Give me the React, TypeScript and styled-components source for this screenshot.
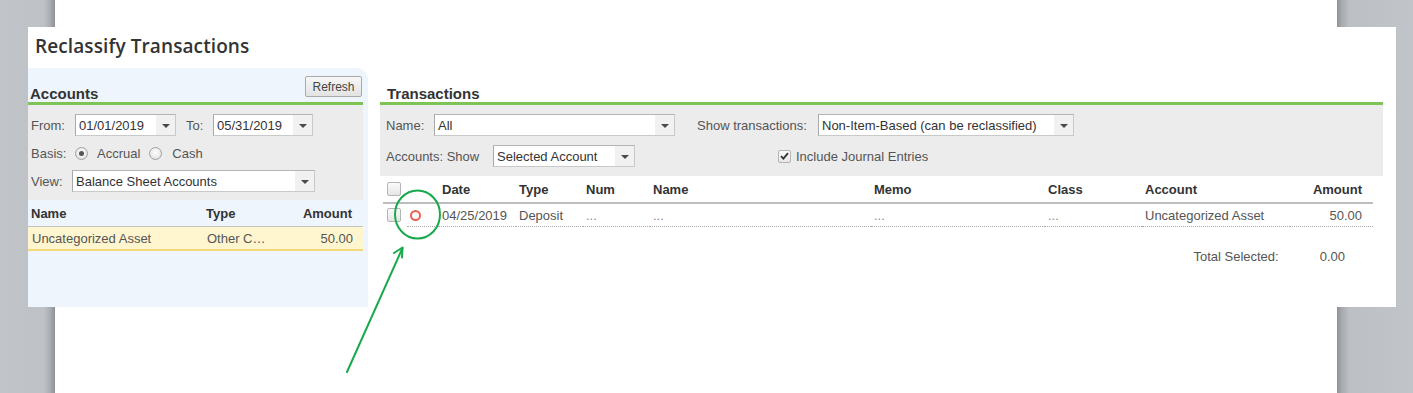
import React from "react";
import styled, { createGlobalStyle, css } from "styled-components";

const GlobalStyle = createGlobalStyle`
  html, body { margin: 0; padding: 0; }
  body {
    font-family: "Liberation Sans", Arial, sans-serif;
    font-size: 13px;
    color: #333;
    background: #fff;
  }
  * { box-sizing: border-box; }
`;

const Stage = styled.div`
  position: relative;
  width: 1413px;
  height: 393px;
  overflow: hidden;
  display: grid;
  grid-template-columns: 55px 1fr 76px;
`;

const SideShade = styled.div<{ $side: "left" | "right" }>`
  background: ${(p) =>
    p.$side === "left"
      ? "linear-gradient(to right, #c1c4c8 0px, #bec1c5 44px, #a9acb0 50px, #8e9296 55px)"
      : "linear-gradient(to right, #8f9397 0px, #a7aaae 5px, #bcc0c4 12px, #c1c4c8 76px)"};
`;

const PageSheet = styled.div`
  background: #fff;
`;

const Dialog = styled.div`
  position: absolute;
  left: 28px;
  top: 27px;
  width: 1368px;
  height: 280px;
  background: #fff;
  display: flex;
  flex-direction: column;
`;

const DialogTitle = styled.h1`
  margin: 0;
  height: 41px;
  padding: 6px 0 0 7px;
  font-family: "Open Sans", "Noto Sans", sans-serif;
  font-weight: 600;
  font-size: 19px;
  line-height: 26px;
  color: #333;
  letter-spacing: 0.1px;
`;

const DialogBody = styled.div`
  flex: 1;
  display: flex;
  gap: 12px;
  min-height: 0;
`;

const AccountsPanel = styled.section`
  width: 340px;
  background: #eef5fd;
  border-top-right-radius: 12px;
  padding-right: 5px;
  display: flex;
  flex-direction: column;
`;

const TransactionsPanel = styled.section`
  width: 1003px;
  display: flex;
  flex-direction: column;
`;

const PanelHeader = styled.div<{ $inset: number }>`
  height: 37px;
  display: flex;
  justify-content: space-between;
  padding-left: ${(p) => p.$inset}px;
  border-bottom: 3px solid #7dc456;
`;

const PanelTitle = styled.h2`
  margin: 0;
  align-self: flex-end;
  font-size: 15px;
  font-weight: bold;
  line-height: 16px;
  color: #333;
`;

const RefreshButton = styled.button`
  align-self: flex-start;
  margin: 8px 1px 0 0;
  height: 21px;
  width: 57px;
  padding: 0;
  font-family: "Liberation Sans", Arial, sans-serif;
  font-size: 12px;
  color: #444;
  border: 1px solid #a9a9a9;
  border-radius: 2px;
  background: linear-gradient(#f7f7f7, #e3e3e3);
`;

const FilterBox = styled.div<{ $pad: string; $gap: number }>`
  background: #ececec;
  padding: ${(p) => p.$pad};
  display: flex;
  flex-direction: column;
  gap: ${(p) => p.$gap}px;
`;

const FilterRow = styled.div<{ $height: number }>`
  display: flex;
  align-items: center;
  height: ${(p) => p.$height}px;
`;

const Label = styled.span<{ $width?: number; $ml?: number }>`
  color: #555;
  font-size: 13px;
  white-space: nowrap;
  ${(p) => p.$width !== undefined && css`width: ${p.$width}px; flex: none;`}
  ${(p) => p.$ml !== undefined && css`margin-left: ${p.$ml}px;`}
`;

const SelectBox = styled.div<{ $width: number; $height?: number; $ml?: number }>`
  width: ${(p) => p.$width}px;
  height: ${(p) => p.$height ?? 22}px;
  flex: none;
  display: flex;
  border: 1px solid #c9c9c9;
  border-left-color: #a9a9a9;
  border-top-color: #b4b4b4;
  background: #fff;
  ${(p) => p.$ml !== undefined && css`margin-left: ${p.$ml}px;`}
`;

const SelectValue = styled.span`
  flex: 1;
  padding-left: 3px;
  display: flex;
  align-items: center;
  font-size: 13px;
  color: #333;
  white-space: nowrap;
  overflow: hidden;
`;

const SelectArrow = styled.span`
  width: 19px;
  flex: none;
  background: #f1f1f1;
  display: flex;
  align-items: center;
  justify-content: center;
  &::after {
    content: "";
    border-left: 4px solid transparent;
    border-right: 4px solid transparent;
    border-top: 4px solid #4a4a4a;
    margin-top: 1px;
  }
`;

const Select = ({ value, width, height, ml }: { value: string; width: number; height?: number; ml?: number }) => (
  <SelectBox $width={width} $height={height} $ml={ml}>
    <SelectValue>{value}</SelectValue>
    <SelectArrow />
  </SelectBox>
);

const Radio = styled.span<{ $checked?: boolean; $ml?: number }>`
  width: 13px;
  height: 13px;
  flex: none;
  border-radius: 50%;
  border: 1px solid #a0a0a0;
  background: radial-gradient(circle at 50% 40%, #fdfdfd, #dcdcdc);
  display: flex;
  align-items: center;
  justify-content: center;
  ${(p) => p.$ml !== undefined && css`margin-left: ${p.$ml}px;`}
  &::after {
    content: "";
    display: ${(p) => (p.$checked ? "block" : "none")};
    width: 5px;
    height: 5px;
    border-radius: 50%;
    background: #555;
  }
`;

const OptionText = styled.span<{ $ml: number }>`
  margin-left: ${(p) => p.$ml}px;
  color: #555;
  font-size: 13px;
  white-space: nowrap;
`;

const CheckBox = styled.span<{ $size?: number; $ml?: number }>`
  width: ${(p) => p.$size ?? 14}px;
  height: ${(p) => p.$size ?? 14}px;
  flex: none;
  border: 1px solid #b5b5b5;
  border-radius: 2px;
  background: linear-gradient(#fbfbfb, #e6e6e6);
  display: flex;
  align-items: center;
  justify-content: center;
  ${(p) => p.$ml !== undefined && css`margin-left: ${p.$ml}px;`}
`;

const CheckMark = () => (
  <svg width="9" height="8" viewBox="0 0 9 8">
    <path d="M1 4.2 L3.4 6.6 L8 1.2" fill="none" stroke="#333" strokeWidth="1.8" />
  </svg>
);

/* left accounts table */
const AccountGrid = styled.div`
  display: grid;
  grid-template-columns: 175px 72px 1fr;
`;

const AccHeadCell = styled.div<{ $right?: boolean }>`
  height: 27px;
  display: flex;
  align-items: center;
  justify-content: ${(p) => (p.$right ? "flex-end" : "flex-start")};
  padding: ${(p) => (p.$right ? "0 11px 0 0" : "0 0 0 3px")};
  font-weight: bold;
  font-size: 13px;
  color: #333;
  border-bottom: 1px solid #c4c4c4;
`;

const AccRowCell = styled.div<{ $right?: boolean }>`
  height: 24px;
  display: flex;
  align-items: center;
  justify-content: ${(p) => (p.$right ? "flex-end" : "flex-start")};
  padding: ${(p) => (p.$right ? "0 10px 0 0" : "0 0 0 4px")};
  font-size: 13px;
  color: #555;
  background: #fff5cf;
  border-bottom: 2px solid #f2d97b;
  white-space: nowrap;
`;

/* right transactions table */
const TxTable = styled.div`
  margin-left: 3px;
  width: 990px;
  display: grid;
  grid-template-columns: 24px 32px 77px 67px 67px 221px 174px 97px 148px 83px;
`;

const TxHeadCell = styled.div<{ $right?: boolean }>`
  height: 28px;
  display: flex;
  align-items: center;
  justify-content: ${(p) => (p.$right ? "flex-end" : "flex-start")};
  padding: ${(p) => (p.$right ? "0 11px 0 0" : "0 0 0 3px")};
  font-weight: bold;
  font-size: 13px;
  color: #333;
  border-bottom: 2px solid #bdbdbd;
`;

const TxCell = styled.div<{ $right?: boolean; $plain?: boolean; $muted?: boolean }>`
  height: 23px;
  display: flex;
  align-items: center;
  justify-content: ${(p) => (p.$right ? "flex-end" : "flex-start")};
  padding: ${(p) => (p.$right ? "0 11px 0 0" : "0 0 0 3px")};
  font-size: 13px;
  color: ${(p) => (p.$muted ? "#8a8a8a" : "#555")};
  border-bottom: ${(p) => (p.$plain ? "1px solid transparent" : "1px dotted #a8a8a8")};
  white-space: nowrap;
`;

const StatusDot = styled.span`
  width: 11px;
  height: 11px;
  border-radius: 50%;
  border: 2px solid #ee5e50;
`;

const TotalRow = styled.div`
  width: 993px;
  display: flex;
  justify-content: flex-end;
  align-items: center;
  gap: 41px;
  height: 16px;
  margin-top: 21px;
  padding-right: 28px;
  color: #555;
  font-size: 13px;
`;

const Annotation = styled.svg`
  position: absolute;
  left: 0;
  top: 0;
  width: 1413px;
  height: 393px;
  pointer-events: none;
`;

const txHeaders: { label: string; right?: boolean }[] = [
  { label: "Date" },
  { label: "Type" },
  { label: "Num" },
  { label: "Name" },
  { label: "Memo" },
  { label: "Class" },
  { label: "Account" },
  { label: "Amount", right: true },
];

export default function App() {
  return (
    <>
      <GlobalStyle />
      <Stage>
        <SideShade $side="left" />
        <PageSheet />
        <SideShade $side="right" />

        <Dialog>
          <DialogTitle>Reclassify Transactions</DialogTitle>
          <DialogBody>
            <AccountsPanel>
              <PanelHeader $inset={2}>
                <PanelTitle>Accounts</PanelTitle>
                <RefreshButton>Refresh</RefreshButton>
              </PanelHeader>
              <FilterBox $pad="9px 0 8px 3px" $gap={8}>
                <FilterRow $height={22}>
                  <Label $width={44}>From:</Label>
                  <Select value="01/01/2019" width={101} />
                  <Label $width={27} $ml={10}>To:</Label>
                  <Select value="05/31/2019" width={100} />
                </FilterRow>
                <FilterRow $height={18}>
                  <Label $width={44}>Basis:</Label>
                  <Radio $checked />
                  <OptionText $ml={9}>Accrual</OptionText>
                  <Radio $ml={9} />
                  <OptionText $ml={10}>Cash</OptionText>
                </FilterRow>
                <FilterRow $height={22}>
                  <Label $width={41}>View:</Label>
                  <Select value="Balance Sheet Accounts" width={243} />
                </FilterRow>
              </FilterBox>
              <AccountGrid>
                <AccHeadCell>Name</AccHeadCell>
                <AccHeadCell>Type</AccHeadCell>
                <AccHeadCell $right>Amount</AccHeadCell>
                <AccRowCell>Uncategorized Asset</AccRowCell>
                <AccRowCell>Other C…</AccRowCell>
                <AccRowCell $right>50.00</AccRowCell>
              </AccountGrid>
            </AccountsPanel>

            <TransactionsPanel>
              <PanelHeader $inset={7}>
                <PanelTitle>Transactions</PanelTitle>
              </PanelHeader>
              <FilterBox $pad="9px 0 9px 6px" $gap={9}>
                <FilterRow $height={22}>
                  <Label $width={48}>Name:</Label>
                  <Select value="All" width={241} />
                  <Label $width={121} $ml={22}>Show transactions:</Label>
                  <Select value="Non-Item-Based (can be reclassified)" width={256} />
                </FilterRow>
                <FilterRow $height={22}>
                  <Label $width={107}>Accounts: Show</Label>
                  <Select value="Selected Account" width={142} />
                  <CheckBox $size={13} $ml={143}>
                    <CheckMark />
                  </CheckBox>
                  <OptionText $ml={5}>Include Journal Entries</OptionText>
                </FilterRow>
              </FilterBox>

              <TxTable>
                <TxHeadCell>
                  <CheckBox $ml={1} />
                </TxHeadCell>
                <TxHeadCell />
                {txHeaders.map((h) => (
                  <TxHeadCell key={h.label} $right={h.right}>
                    {h.label}
                  </TxHeadCell>
                ))}

                <TxCell $plain>
                  <CheckBox $ml={1} />
                </TxCell>
                <TxCell>
                  <StatusDot />
                </TxCell>
                <TxCell>04/25/2019</TxCell>
                <TxCell>Deposit</TxCell>
                <TxCell $muted>...</TxCell>
                <TxCell $muted>...</TxCell>
                <TxCell $muted>...</TxCell>
                <TxCell $muted>...</TxCell>
                <TxCell>Uncategorized Asset</TxCell>
                <TxCell $right>50.00</TxCell>
              </TxTable>

              <TotalRow>
                <span>Total Selected:</span>
                <span>0.00</span>
              </TotalRow>
            </TransactionsPanel>
          </DialogBody>
        </Dialog>

        <Annotation viewBox="0 0 1413 393">
          <ellipse cx="417.5" cy="214.5" rx="22.5" ry="24" fill="none" stroke="#17a94b" strokeWidth="2" />
          <line x1="347" y1="372" x2="402.5" y2="248" stroke="#17a94b" strokeWidth="2" strokeLinecap="round" />
          <polyline
            points="394,253 402.5,247.5 402,257.5"
            fill="none"
            stroke="#17a94b"
            strokeWidth="2"
            strokeLinecap="round"
            strokeLinejoin="round"
          />
        </Annotation>
      </Stage>
    </>
  );
}
